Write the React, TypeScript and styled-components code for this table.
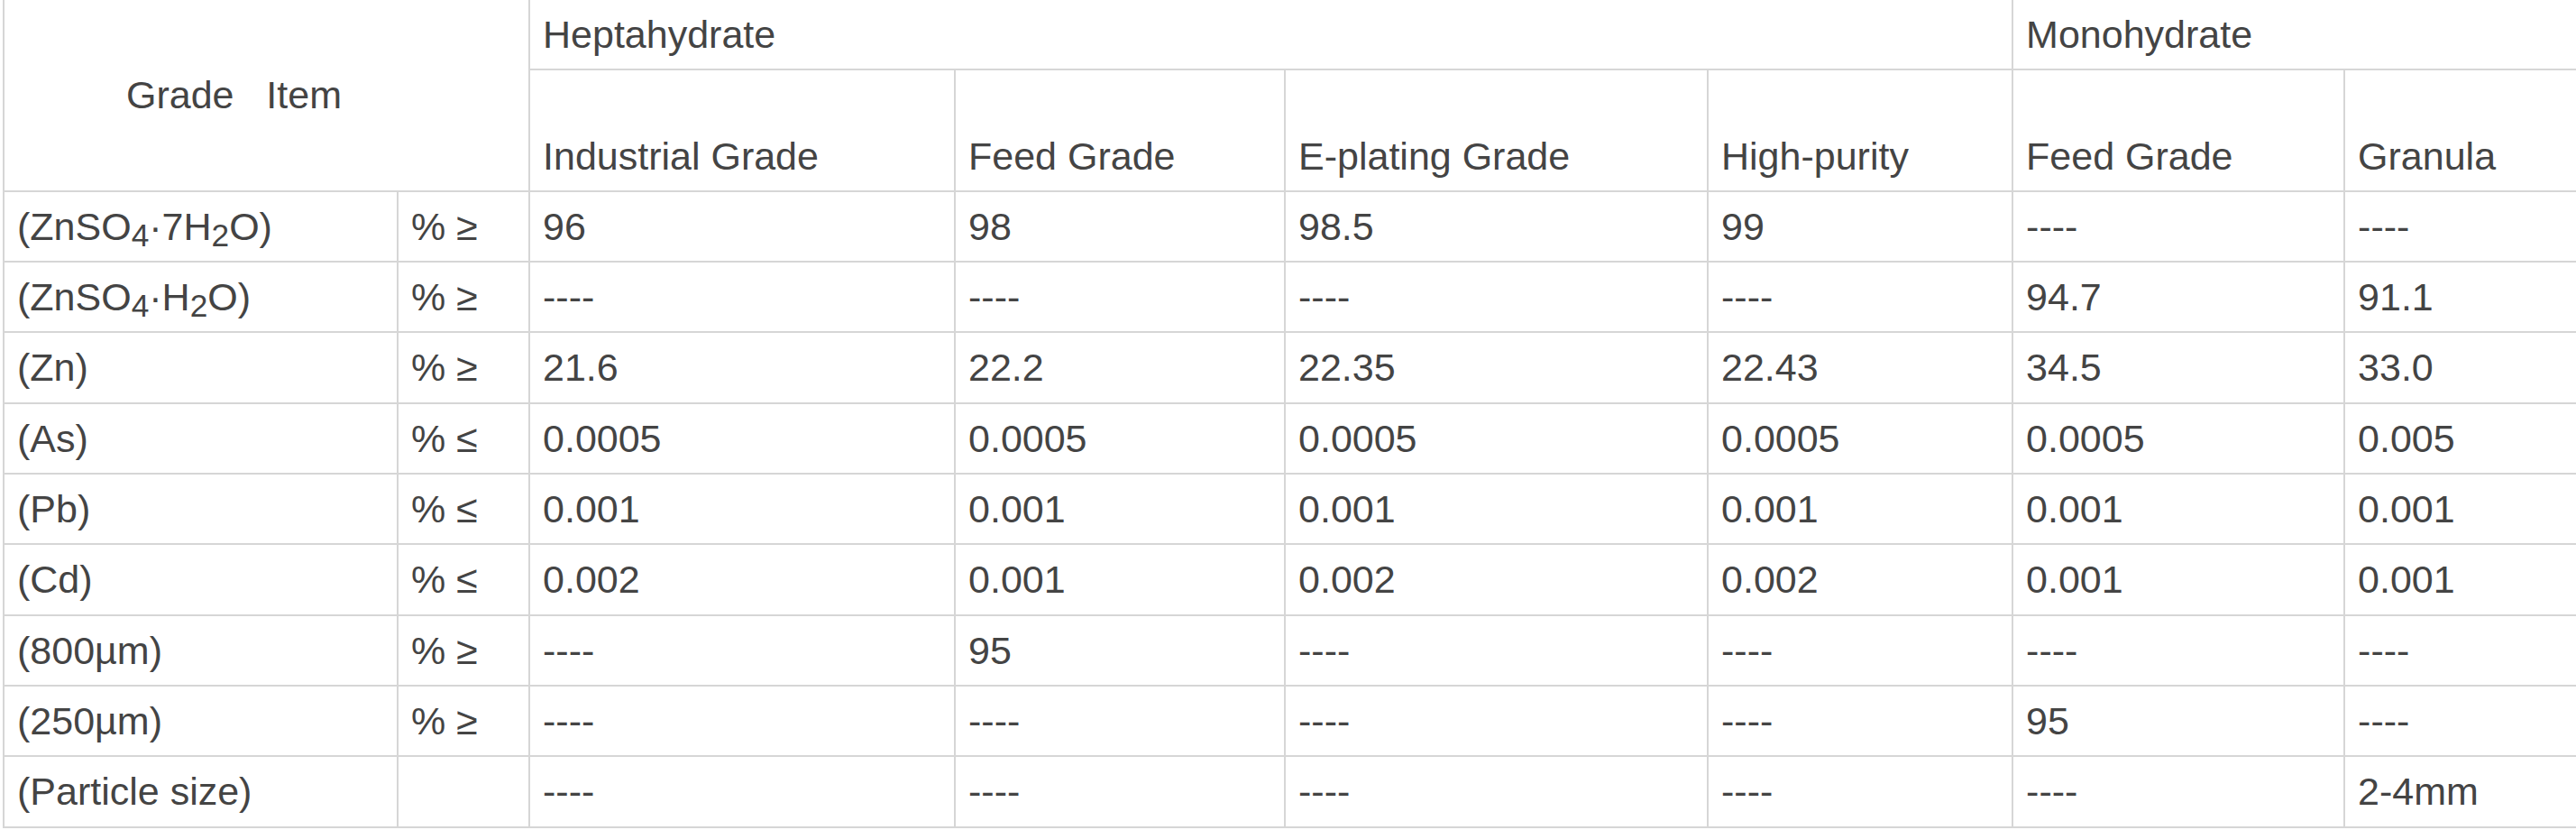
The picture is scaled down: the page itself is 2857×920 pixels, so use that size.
import { FC, ReactNode } from "react";
import styled, { createGlobalStyle } from "styled-components";

const GlobalStyle = createGlobalStyle`
  html, body {
    margin: 0;
    padding: 0;
    background: #ffffff;
    overflow: hidden;
  }
  body {
    font-family: "Liberation Sans", Arial, sans-serif;
  }
`;

const LINE = 56.3;
const BORDER = "2px solid #d6d6d6";

const columnWidths = [437, 146, 472, 366, 469, 338, 368, 370];

type Row = {
  item: ReactNode;
  unit: string;
  values: string[];
};

const rows: Row[] = [
  {
    item: (
      <>
        (ZnSO<sub>4</sub>·7H<sub>2</sub>O)
      </>
    ),
    unit: "% ≥",
    values: ["96", "98", "98.5", "99", "----", "----"],
  },
  {
    item: (
      <>
        (ZnSO<sub>4</sub>·H<sub>2</sub>O)
      </>
    ),
    unit: "% ≥",
    values: ["----", "----", "----", "----", "94.7", "91.1"],
  },
  { item: "(Zn)", unit: "% ≥", values: ["21.6", "22.2", "22.35", "22.43", "34.5", "33.0"] },
  {
    item: "(As)",
    unit: "% ≤",
    values: ["0.0005", "0.0005", "0.0005", "0.0005", "0.0005", "0.005"],
  },
  {
    item: "(Pb)",
    unit: "% ≤",
    values: ["0.001", "0.001", "0.001", "0.001", "0.001", "0.001"],
  },
  {
    item: "(Cd)",
    unit: "% ≤",
    values: ["0.002", "0.001", "0.002", "0.002", "0.001", "0.001"],
  },
  { item: "(800µm)", unit: "% ≥", values: ["----", "95", "----", "----", "----", "----"] },
  { item: "(250µm)", unit: "% ≥", values: ["----", "----", "----", "----", "95", "----"] },
  {
    item: "(Particle size)",
    unit: "",
    values: ["----", "----", "----", "----", "----", "2-4mm"],
  },
];

const heptaGrades = ["Industrial Grade", "Feed Grade", "E-plating Grade", "High-purity"];
const monoGrades = ["Feed Grade", "Granula"];

const App: FC = () => {
  return (
    <>
      <GlobalStyle />
      <Page>
        <Table>
          <colgroup>
            {columnWidths.map((w, i) => (
              <col key={i} style={{ width: `${w}px` }} />
            ))}
          </colgroup>
          <thead>
            <tr>
              <CornerCell colSpan={2} rowSpan={2}>
                Grade&nbsp;&nbsp;&nbsp;Item
              </CornerCell>
              <Cell colSpan={4}>Heptahydrate</Cell>
              <Cell colSpan={2}>Monohydrate</Cell>
            </tr>
            <tr>
              {[...heptaGrades, ...monoGrades].map((g, i) => (
                <GradeCell key={i}>{g}</GradeCell>
              ))}
            </tr>
          </thead>
          <tbody>
            {rows.map((row, i) => (
              <tr key={i}>
                <Cell>{row.item}</Cell>
                <Cell>{row.unit}</Cell>
                {row.values.map((v, j) => (
                  <Cell key={j}>{v}</Cell>
                ))}
              </tr>
            ))}
          </tbody>
        </Table>
      </Page>
    </>
  );
};

const Page = styled.div`
  padding: 0 0 0 3px;
  margin-top: -2px;
`;

const Table = styled.table`
  border-collapse: collapse;
  table-layout: fixed;
  width: ${columnWidths.reduce((a, b) => a + b, 0)}px;
  color: #444444;
  font-size: 43px;
  line-height: ${LINE}px;

  sub {
    font-size: 0.82em;
    line-height: 0;
    vertical-align: -0.2em;
  }
`;

const Cell = styled.td`
  border: ${BORDER};
  padding: 10px 14px;
  text-align: left;
  vertical-align: middle;
  font-weight: normal;
  white-space: nowrap;
  overflow: hidden;
`;

const CornerCell = styled(Cell)`
  text-align: center;
  padding-right: 86px;
`;

const GradeCell = styled(Cell)`
  padding-top: ${10 + LINE}px;
  vertical-align: bottom;
`;

export default App;
